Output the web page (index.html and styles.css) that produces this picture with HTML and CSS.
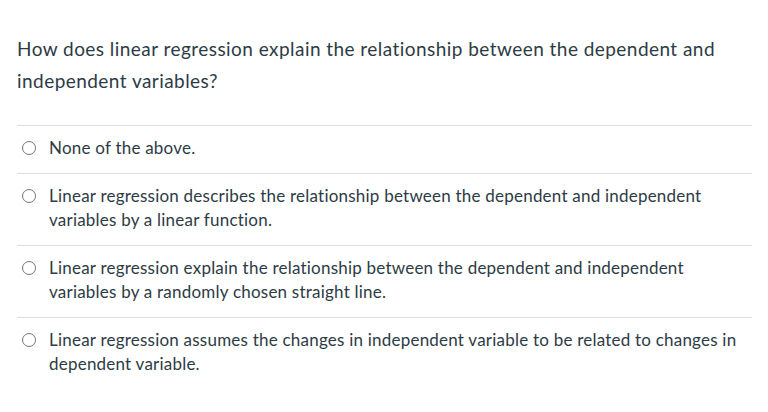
FILE: index.html
```html
<!DOCTYPE html>
<html lang="en">
<head>
<meta charset="utf-8">
<title>Quiz question</title>
<link rel="stylesheet" href="styles.css">
</head>
<body>
<div class="question">
  <p class="question-text">How does linear regression explain the relationship between the dependent and independent variables?</p>
  <div class="answers">
    <label class="answer"><span class="radio"></span><span class="answer-text">None of the above.</span></label>
    <label class="answer"><span class="radio"></span><span class="answer-text">Linear regression describes the relationship between the dependent and independent variables by a linear function.</span></label>
    <label class="answer"><span class="radio"></span><span class="answer-text">Linear regression explain the relationship between the dependent and independent variables by a randomly chosen straight line.</span></label>
    <label class="answer"><span class="radio"></span><span class="answer-text">Linear regression assumes the changes in independent variable to be related to changes in dependent variable.</span></label>
  </div>
</div>
</body>
</html>
```
FILE: styles.css
```css
html, body {
  margin: 0;
  padding: 0;
  background: #ffffff;
}
body {
  font-family: Lato, "Liberation Sans", sans-serif;
  color: #2d3b45;
}
.question {
  padding: 33px 16px 0 17px;
}
.question-text {
  margin: 0 0 28px 0;
  font-size: 19px;
  letter-spacing: 0.45px;
  line-height: 32px;
  padding-right: 10px;
}
.answers {
  display: flex;
  flex-direction: column;
}
.answer {
  display: flex;
  align-items: flex-start;
  border-top: 1px solid #dddddd;
  padding: 10px 0 13px 5px;
  font-size: 17px;
  letter-spacing: 0.22px;
  line-height: 24px;
}
.radio {
  flex: none;
  box-sizing: border-box;
  width: 14px;
  height: 14px;
  margin-top: 5px;
  margin-right: 13px;
  border: 1px solid #767676;
  border-radius: 50%;
  background: #fff;
}
.answer-text {
  flex: 1;
  padding-right: 6px;
}
```
